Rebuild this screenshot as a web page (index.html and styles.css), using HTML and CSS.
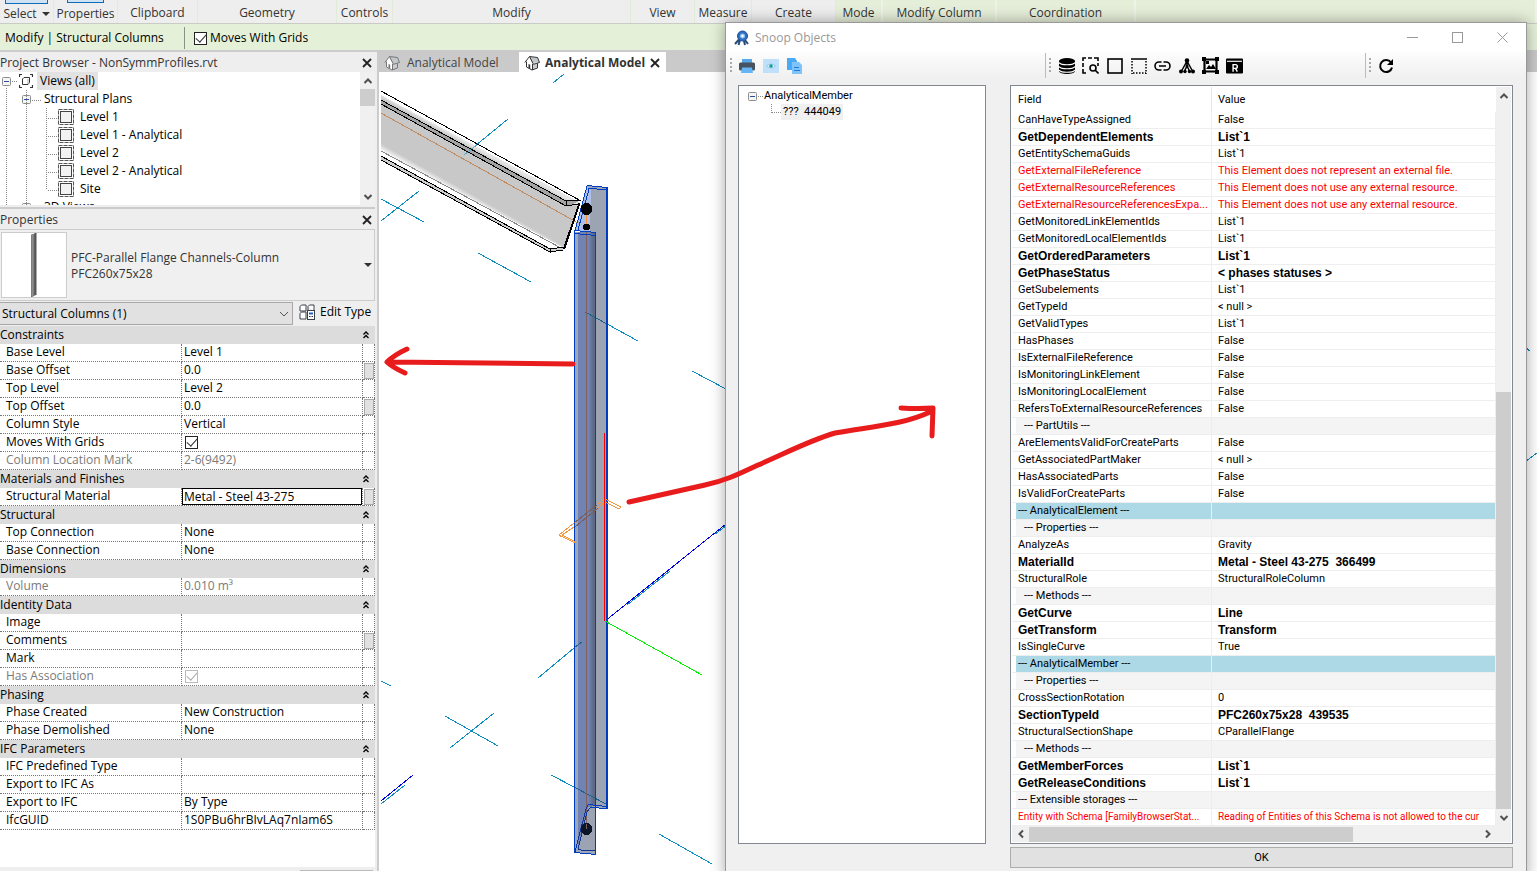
FILE: index.html
```html
<!DOCTYPE html>
<html lang="en">
<head>
<meta charset="utf-8">
<title>Snoop Objects</title>
<link rel="stylesheet" href="styles.css">
</head>
<body>
<svg class="defs" width="0" height="0" aria-hidden="true">
  <symbol id="house" viewBox="0 0 16 16">
    <path d="M1 6.500 5.500 2v11.500L2.500 12V7z" fill="#fff"/>
    <path d="M5.500 1.500 14 3l1.300 4.500L7 8z" fill="#c3c7cc"/>
    <path d="M2.500 7 5.500 3.500 9 9v5.500L7 15l-4.500-3z" fill="#fff"/>
    <path d="M8.500 9.500 13.500 8v5l-5 2z" fill="#c9cdd2"/>
    <path d="M.800 7.500 5.500 1.500 9.500 9.300M5.500 1.500 13.500 2.500l2 5-6 1.800M2.500 6.500V12l5.500 3 5.500-2V8.500M8.500 9v6" fill="none" stroke="currentColor"/>
    <path d="M4.500 9v4.300l1.700 1V9.800z" fill="currentColor"/>
  </symbol>
  <symbol id="plan" viewBox="0 0 16 16">
    <rect x=".5" y=".5" width="15" height="15" fill="#fff" stroke="#555" stroke-dasharray="4 1"/>
    <rect x="2.500" y="2.500" width="11" height="11" fill="#f2f2f2" stroke="#444"/>
  </symbol>
  <symbol id="minus" viewBox="0 0 9 9">
    <rect x=".5" y=".5" width="8" height="8" rx="1" fill="#f6f6f6" stroke="#8c8c8c"/>
    <path d="M2 4.500h5" stroke="#2b4fa3"/>
  </symbol>
  <symbol id="close" viewBox="0 0 10 10">
    <path d="M1 1l8 8M9 1 1 9" stroke="#222" stroke-width="1.800" fill="none"/>
  </symbol>
  <symbol id="fold" viewBox="0 0 8 8">
    <path d="M1.500 3.500 4 1l2.500 2.500M1.500 7 4 4.500 6.500 7" stroke="#000" stroke-width="1.300" fill="none"/>
  </symbol>
  <symbol id="chev" viewBox="0 0 10 10">
    <path d="M1.500 7 5 3.500 8.500 7" stroke="#505050" stroke-width="2" fill="none"/>
  </symbol>
</svg>

<div class="app">
  <nav class="ribbon">
    <div class="panel p-select"><button class="plain">Select <span class="caret"></span></button></div>
    <div class="panel p-props"><span>Properties</span></div>
    <div class="panel p-clip">Clipboard</div>
    <div class="panel p-geom">Geometry</div>
    <div class="panel p-ctrl">Controls</div>
    <div class="panel p-mod">Modify</div>
    <div class="panel p-view">View</div>
    <div class="panel p-meas">Measure</div>
    <div class="panel p-create">Create</div>
    <div class="panel green p-mode">Mode</div>
    <div class="panel green p-modcol">Modify Column</div>
    <div class="panel green p-coord">Coordination</div>
    <div class="panel green p-rest"></div>
  </nav>

  <div class="options">
    <span class="context">Modify | Structural Columns</span>
    <label class="opt"><input type="checkbox" class="check" checked> Moves With Grids</label>
  </div>

  <main class="work">
    <aside class="side">
      <header class="side-title"><span>Project Browser - NonSymmProfiles.rvt</span><button class="icon-btn" aria-label="Close project browser"><svg width="10" height="10"><use href="#close"/></svg></button></header>
      <div class="browser">
        <div class="tree">
          <svg class="tree-lines" width="60" height="134" aria-hidden="true">
            <path d="M6.500 16v118M26.500 18v116M46.500 36v82M12 9.500h5M32 28.500h9M48 46.500h9M48 64.500h9M48 82.500h9M48 100.500h9M48 118.500h9" stroke="#888" stroke-dasharray="1 1" fill="none"/>
          </svg>
          <ul>
            <li class="lv0"><svg width="9" height="9"><use href="#minus"/></svg><svg width="14" height="14" viewBox="0 0 14 14" fill="none"><path d="M.5 3V.5H3M11 .5h2.500V3M13.500 11v2.500H11M3 13.500H.5V11" stroke="#333" stroke-width="1.200"/><path d="M3.500 5 5 3.500h5.500v5L9 10.500H3.500z" fill="#fff" stroke="#333"/><path d="M9 10V5" stroke="#aaa"/></svg><span class="sel">Views (all)</span></li>
            <li class="lv1"><svg width="9" height="9"><use href="#minus"/></svg><span>Structural Plans</span></li>
            <li class="lv2"><svg width="16" height="16"><use href="#plan"/></svg><span>Level 1</span></li>
            <li class="lv2"><svg width="16" height="16"><use href="#plan"/></svg><span>Level 1 - Analytical</span></li>
            <li class="lv2"><svg width="16" height="16"><use href="#plan"/></svg><span>Level 2</span></li>
            <li class="lv2"><svg width="16" height="16"><use href="#plan"/></svg><span>Level 2 - Analytical</span></li>
            <li class="lv2"><svg width="16" height="16"><use href="#plan"/></svg><span>Site</span></li>
            <li class="lv1"><svg width="9" height="9"><use href="#minus"/></svg><span>3D Views</span></li>
          </ul>
        </div>
        <div class="vbar">
          <button class="icon-btn arrow" aria-label="Scroll up"><svg width="10" height="10"><use href="#chev"/></svg></button>
          <div class="track"><div class="thumb short"></div></div>
          <button class="icon-btn arrow down" aria-label="Scroll down"><svg width="10" height="10"><use href="#chev"/></svg></button>
        </div>
      </div>

      <header class="side-title props-title"><span>Properties</span><button class="icon-btn" aria-label="Close properties"><svg width="10" height="10"><use href="#close"/></svg></button></header>
      <button class="type">
        <svg class="thumb-img" width="66" height="66" viewBox="0 0 66 66"><rect x=".5" y=".5" width="65" height="65" fill="#fff" stroke="#ccc"/><path d="M30 3l5-2v62l-4 2h-1z" fill="#6d6d6d"/><path d="M31.500 2v62" stroke="#8e8e8e" stroke-width="2"/><path d="M34.500 1v62" stroke="#555" stroke-width="2"/></svg>
        <span class="type-name">PFC-Parallel Flange Channels-Column<br>PFC260x75x28</span>
        <span class="caret"></span>
      </button>
      <div class="filter">
        <div class="combo">
          <select aria-label="Category"><option>Structural Columns (1)</option></select>
          <svg width="10" height="6" viewBox="0 0 10 6"><path d="M1 1l4 4 4-4" fill="none" stroke="#555"/></svg>
        </div>
        <button class="plain edit"><svg width="16" height="16" viewBox="0 0 16 16" fill="#fff" stroke="#3a4048"><path d="M1 2.500 2.500 1H7v6H1zM9 2.500 10.500 1H15v6M9 7V2.500M1 9.500 2.500 8H7v7H1z"/><rect x="8.500" y="6.500" width="7" height="9"/><path d="M10 9.500h4" stroke="#1f62b8" stroke-width="2"/><path d="M10 12.500h1.500M12.500 12.500H14" stroke="#333"/></svg> Edit Type</button>
      </div>

      <div class="grid-wrap">
      <table class="props">
        <colgroup><col class="c-name"><col><col class="c-btn"></colgroup>
        <tbody>
        <tr class="group"><th colspan="3"><div>Constraints <button class="icon-btn" aria-label="Collapse"><svg width="8" height="8"><use href="#fold"/></svg></button></div></th></tr>
        <tr><th>Base Level</th><td>Level 1</td><td></td></tr>
        <tr><th>Base Offset</th><td>0.0</td><td><button class="assoc" aria-label="Associate"></button></td></tr>
        <tr><th>Top Level</th><td>Level 2</td><td></td></tr>
        <tr><th>Top Offset</th><td>0.0</td><td><button class="assoc" aria-label="Associate"></button></td></tr>
        <tr><th>Column Style</th><td>Vertical</td><td></td></tr>
        <tr><th><label for="mwg">Moves With Grids</label></th><td class="tick"><input id="mwg" type="checkbox" class="check" checked></td><td></td></tr>
        <tr class="off"><th>Column Location Mark</th><td>2-6(9492)</td><td></td></tr>
        <tr class="group"><th colspan="3"><div>Materials and Finishes <button class="icon-btn" aria-label="Collapse"><svg width="8" height="8"><use href="#fold"/></svg></button></div></th></tr>
        <tr><th><label for="mat">Structural Material</label></th><td class="edit-cell"><input id="mat" type="text" value="Metal - Steel 43-275"></td><td><button class="assoc" aria-label="Associate"></button></td></tr>
        <tr class="group"><th colspan="3"><div>Structural <button class="icon-btn" aria-label="Collapse"><svg width="8" height="8"><use href="#fold"/></svg></button></div></th></tr>
        <tr><th>Top Connection</th><td>None</td><td></td></tr>
        <tr><th>Base Connection</th><td>None</td><td></td></tr>
        <tr class="group"><th colspan="3"><div>Dimensions <button class="icon-btn" aria-label="Collapse"><svg width="8" height="8"><use href="#fold"/></svg></button></div></th></tr>
        <tr class="off"><th>Volume</th><td>0.010 m³</td><td></td></tr>
        <tr class="group"><th colspan="3"><div>Identity Data <button class="icon-btn" aria-label="Collapse"><svg width="8" height="8"><use href="#fold"/></svg></button></div></th></tr>
        <tr><th>Image</th><td></td><td></td></tr>
        <tr><th>Comments</th><td></td><td><button class="assoc" aria-label="Associate"></button></td></tr>
        <tr><th>Mark</th><td></td><td></td></tr>
        <tr class="off"><th><label for="assoc">Has Association</label></th><td class="tick"><input id="assoc" type="checkbox" class="check" checked disabled></td><td></td></tr>
        <tr class="group"><th colspan="3"><div>Phasing <button class="icon-btn" aria-label="Collapse"><svg width="8" height="8"><use href="#fold"/></svg></button></div></th></tr>
        <tr><th>Phase Created</th><td>New Construction</td><td></td></tr>
        <tr><th>Phase Demolished</th><td>None</td><td></td></tr>
        <tr class="group"><th colspan="3"><div>IFC Parameters <button class="icon-btn" aria-label="Collapse"><svg width="8" height="8"><use href="#fold"/></svg></button></div></th></tr>
        <tr><th>IFC Predefined Type</th><td></td><td></td></tr>
        <tr><th>Export to IFC As</th><td></td><td></td></tr>
        <tr><th>Export to IFC</th><td>By Type</td><td></td></tr>
        <tr><th>IfcGUID</th><td>1S0PBu6hrBIvLAq7nIam6S</td><td></td></tr>
        </tbody>
      </table>
      </div>
      <footer class="side-foot"><span></span></footer>
    </aside>

    <section class="viewer">
      <div class="tabs">
        <button class="tab"><svg width="16" height="16"><use href="#house"/></svg><span>Analytical Model</span></button>
        <button class="tab active"><svg width="16" height="16"><use href="#house"/></svg><span>Analytical Model</span><svg width="10" height="10"><use href="#close"/></svg></button>
      </div>
      <svg class="model" viewBox="379 72 1158 799" preserveAspectRatio="xMinYMin slice" fill="none" shape-rendering="crispEdges">
        <defs>
          <linearGradient id="web" gradientUnits="userSpaceOnUse" x1="381" y1="95" x2="357" y2="138">
            <stop offset="0" stop-color="#e4e4e4"/><stop offset=".06" stop-color="#c8c8c8"/><stop offset=".86" stop-color="#c8c8c8"/><stop offset="1" stop-color="#fff"/>
          </linearGradient>
          <linearGradient id="flange" x1="0" x2="1" y1="0" y2="0">
            <stop offset="0" stop-color="#7083b3"/><stop offset=".6" stop-color="#7083b3"/><stop offset=".85" stop-color="#5f6b84"/><stop offset="1" stop-color="#5f6b84"/>
          </linearGradient>
        </defs>
        <g stroke="#0a8cc0">
          <path d="M553 83l11-9M464 155l44-36M381 221l38-30M381 199l43 23M478 253l53 29M692 371l34 18M627 605l43-34M715 534l11-8M538 678l36-30M381 681l10 5M445 716l53 30M450 748l44-35M381 804l24-19M551 775l23 12M659 834l53 30M1526 461l11-8M1526 348l4 3"/>
        </g>
        <path d="M605 621l121-97M381 801l32-26" stroke="#0000e0"/>
        <path d="M381 95l198 107-15 46-183-97z" fill="url(#web)"/>
        <path d="M381 100l185 101 14-1-8 5-6 1-185-102z" fill="#a4a4a4"/>
        <path d="M464 155l14-11" stroke="#5fa5bd"/>
        <path d="M381 156l169 93 13-2v3l-13 2-169-92z" fill="#d0d0d0"/>
        <path d="M381 151l180 97" stroke="#888"/>
        <path d="M381 113l206 115" stroke="#c08a5c"/>
        <g stroke="#000">
          <path d="M381 91l200 110M381 100l185 101 14-1M381 104l185 102 12-2M381 156l169 93 14-2M381 160l169 92 13-2M566 201v5M550 249v4"/>
          <path d="M579.500 203 564 249" stroke-width="2"/>
        </g>
        <path d="M587 186l20 2v620l-17-1-3-1z" fill="#9ca3b3"/>
        <path d="M587 187l4 1-1 44-15-1z" fill="#aebfea"/>
        <path d="M574 232l22 2v620l-22-2z" fill="#9ca7ba"/>
        <path d="M578 232h18v574l-8 1-10 42z" fill="url(#flange)"/>
        <path d="M588 807h8v45l-18-3z" fill="#9ca3b3"/>
        <path d="M585 312l22 12M574 648l8-6M574 787l32 17" stroke="#1b648d"/>
        <path d="M607 324l31 17" stroke="#0a8cc0"/>
        <path d="M586.500 232v592" stroke="#80605c"/>
        <path d="M586.500 214v12" stroke="#ff9030"/>
        <g stroke="#003cc0">
          <path d="M574.500 231v621M595.500 233v621M587 185.500l20 2M588 188.500l18 1M587 186l-12 45M589 189l-11 41M574 230.500l22 2M575 233.500l21 2M588 804.500l19 2M590 807.500l17 1M574 852.500l22 2"/>
          <path d="M606.500 187v622" stroke-width="2"/>
          <path d="M588 805l-2 4-11 43M590 808l-3 4-9 37 3 1 15 1" stroke="#12368f"/>
        </g>
        <g fill="#000"><circle cx="586.500" cy="209" r="6"/><circle cx="586.500" cy="227" r="3.500"/><circle cx="586.500" cy="829" r="6" fill="#0d1528"/></g>
        <path d="M586.500 824v5" stroke="#80605c"/>
        <path d="M574 523l-15 12 16 8M574 527l-12 8 14 7M597 505l8-6 16 8-2 2-14-7-7 6M559 535l2 2" stroke="#f59540"/>
        <path d="M574 523l23-18M575 527l23-19" stroke="#7d5c55"/>
        <path d="M604.500 433v188" stroke="#ff0000"/>
        <path d="M605 621l97 54" stroke="#00f000"/>
      </svg>
    </section>
  </main>
</div>

<section class="dialog" role="dialog" aria-labelledby="dlg-title">
  <header class="dlg-head">
    <svg width="16" height="16" viewBox="0 0 16 16"><path d="M1 14l4-4.500M11 10l3 4M6 10l-1.500 5M10 11l1 4" stroke="#274b78" stroke-width="2"/><circle cx="8.500" cy="6" r="5" fill="#2f6fc4" stroke="#1c4d91"/><circle cx="8.500" cy="6" r="2.500" fill="#8cc4f4"/><circle cx="8.500" cy="6" r="1.200" fill="#fff"/></svg>
    <h1 id="dlg-title">Snoop Objects</h1>
    <div class="win-btns">
      <button class="icon-btn" aria-label="Minimize"><svg width="11" height="11" viewBox="0 0 11 11"><path d="M0 5.500h11" stroke="#999"/></svg></button>
      <button class="icon-btn" aria-label="Maximize"><svg width="11" height="11" viewBox="0 0 11 11"><rect x=".5" y=".5" width="10" height="10" fill="none" stroke="#999"/></svg></button>
      <button class="icon-btn" aria-label="Close"><svg width="11" height="11" viewBox="0 0 11 11"><path d="M.5.5l10 10M10.500.5l-10 10" stroke="#999"/></svg></button>
    </div>
  </header>
  <div class="toolbars">
    <div class="strip s1"><i class="grip"></i>
      <button class="icon-btn" aria-label="Print"><svg width="18" height="16" viewBox="0 0 18 16"><rect x="4" y="1" width="10" height="5" fill="#56a8e8"/><rect x="1" y="4.500" width="16" height="8" rx="1.500" fill="#47525e"/><path d="M4 9.500h10l1 5.500H3z" fill="#63b5f5"/></svg></button>
      <button class="icon-btn" aria-label="Preview"><svg width="16" height="14" viewBox="0 0 16 14"><rect width="16" height="14" fill="#bfe0fb"/><path d="M3.500 7Q8 3 12.500 7 8 11 3.500 7z" fill="#e3f4fc" stroke="#8bc2dd" stroke-width=".8"/><circle cx="8" cy="7" r="1.800" fill="#149c9c"/></svg></button>
      <button class="icon-btn" aria-label="Copy"><svg width="16" height="16" viewBox="0 0 16 16"><path d="M1 0h8l2 3v9H1z" fill="#4ba9f5"/><path d="M6 4h7l3 3v9H6z" fill="#7ec4fa"/><path d="M8 9.500h5M8 12.500h6" stroke="#217bd0"/></svg></button>
    </div>
    <div class="strip s2"><i class="grip"></i>
      <button class="icon-btn" aria-label="Snoop database"><svg width="16" height="16" viewBox="0 0 16 16"><path d="M0 3v10c0 4 16 4 16 0V3z"/><ellipse cx="8" cy="3" rx="8" ry="3"/><path d="M0 4.500c2 3 14 3 16 0M0 8.500c2 3 14 3 16 0M0 12c2 3 14 3 16 0" stroke="#fff" stroke-width="1.200" fill="none"/></svg></button>
      <button class="icon-btn" aria-label="Snoop current selection"><svg width="17" height="17" viewBox="0 0 17 17" fill="none" stroke="#000" stroke-width="1.600"><path d="M1 4V1h3M6 1h4M12 1h4v3M16 6v3M1 6v4M1 12v4h3"/><circle cx="11" cy="11" r="3"/><path d="M13 13l3.500 3.500"/></svg></button>
      <button class="icon-btn" aria-label="Pick face"><svg width="16" height="16" viewBox="0 0 16 16" fill="none" stroke="#000" stroke-width="1.600"><rect x="1" y="1" width="14" height="14"/></svg></button>
      <button class="icon-btn" aria-label="Pick edge"><svg width="16" height="16" viewBox="0 0 16 16" fill="none" stroke="#000" stroke-width="1.500"><path d="M0 1h16"/><path d="M1 3v13M15 3v13M2 15h13" stroke-dasharray="1.500 1.500"/></svg></button>
      <button class="icon-btn" aria-label="Linked element"><svg width="17" height="10" viewBox="0 0 17 10" fill="none" stroke="#000" stroke-width="1.600"><path d="M7.500 1H5a4 4 0 0 0 0 8h2.500M9.500 1H12a4 4 0 0 1 0 8H9.500M5 5h7"/></svg></button>
      <button class="icon-btn" aria-label="Dependent elements"><svg width="16" height="16" viewBox="0 0 16 16"><path d="M8 2v6M8 3 2 14M8 3l6 11M8 8l-3 6M8 8l3 6" stroke="#000" stroke-width="1.500"/><circle cx="8" cy="2.500" r="2.300"/><circle cx="2" cy="13.500" r="2"/><circle cx="6" cy="13.500" r="1.700"/><circle cx="10.500" cy="13.500" r="1.700"/><circle cx="14" cy="13.500" r="2"/><circle cx="8" cy="8" r="1.500"/></svg></button>
      <button class="icon-btn" aria-label="Active view"><svg width="17" height="17" viewBox="0 0 17 17"><path d="M2.500 2.500h12v12h-12z" fill="none" stroke="#000" stroke-width="2.200"/><path d="M0 0h4v4H0zM13 0h4v4h-4zM0 13h4v4H0zM13 13h4v4h-4zM4 12l3-4 2 2 2-3 3 5zM4 4h3v3H4z"/></svg></button>
      <button class="icon-btn" aria-label="Snoop application"><svg width="18" height="16" viewBox="0 0 18 16"><rect width="18" height="16" rx="1"/><path d="M1 3h16" stroke="#fff" stroke-width="1.200"/><path d="M7.500 14V6.500h2.500a2 2 0 0 1 0 4H8M10 10.500l2 3.500" fill="none" stroke="#fff" stroke-width="1.500"/></svg></button>
    </div>
    <div class="strip s3"><i class="grip"></i>
      <button class="icon-btn" aria-label="Refresh"><svg width="16" height="16" viewBox="0 0 16 16"><path d="M13 4.500A6 6 0 1 0 14 9.500" fill="none" stroke="#000" stroke-width="2"/><path d="M15 1v6H9z"/></svg></button>
    </div>
  </div>

  <div class="dlg-body">
    <div class="objects">
      <ul>
        <li class="o0"><svg width="9" height="9"><use href="#minus"/></svg><i class="dots"></i><span>AnalyticalMember</span></li>
        <li class="o1"><i class="elbow"></i><span class="sel">???&nbsp; 444049</span></li>
      </ul>
    </div>
    <div class="results">
      <div class="list">
        <div class="list-main">
          <table class="snoop">
            <colgroup><col class="c-field"><col></colgroup>
            <thead><tr><th>Field</th><th>Value</th></tr></thead>
            <tbody>
            <tr><td>CanHaveTypeAssigned</td><td>False</td></tr>
            <tr class="b"><td>GetDependentElements</td><td>List`1</td></tr>
            <tr><td>GetEntitySchemaGuids</td><td>List`1</td></tr>
            <tr class="err"><td>GetExternalFileReference</td><td>This Element does not represent an external file.</td></tr>
            <tr class="err"><td>GetExternalResourceReferences</td><td>This Element does not use any external resource.</td></tr>
            <tr class="err"><td>GetExternalResourceReferencesExpa...</td><td>This Element does not use any external resource.</td></tr>
            <tr><td>GetMonitoredLinkElementIds</td><td>List`1</td></tr>
            <tr><td>GetMonitoredLocalElementIds</td><td>List`1</td></tr>
            <tr class="b"><td>GetOrderedParameters</td><td>List`1</td></tr>
            <tr class="b"><td>GetPhaseStatus</td><td>&lt; phases statuses &gt;</td></tr>
            <tr><td>GetSubelements</td><td>List`1</td></tr>
            <tr><td>GetTypeId</td><td>&lt; null &gt;</td></tr>
            <tr><td>GetValidTypes</td><td>List`1</td></tr>
            <tr><td>HasPhases</td><td>False</td></tr>
            <tr><td>IsExternalFileReference</td><td>False</td></tr>
            <tr><td>IsMonitoringLinkElement</td><td>False</td></tr>
            <tr><td>IsMonitoringLocalElement</td><td>False</td></tr>
            <tr><td>RefersToExternalResourceReferences</td><td>False</td></tr>
            <tr class="sub in"><td>--- PartUtils ---</td><td></td></tr>
            <tr><td>AreElementsValidForCreateParts</td><td>False</td></tr>
            <tr><td>GetAssociatedPartMaker</td><td>&lt; null &gt;</td></tr>
            <tr><td>HasAssociatedParts</td><td>False</td></tr>
            <tr><td>IsValidForCreateParts</td><td>False</td></tr>
            <tr class="cls"><td>--- AnalyticalElement ---</td><td></td></tr>
            <tr class="sub in"><td>--- Properties ---</td><td></td></tr>
            <tr><td>AnalyzeAs</td><td>Gravity</td></tr>
            <tr class="b"><td>MaterialId</td><td>Metal - Steel 43-275&nbsp; 366499</td></tr>
            <tr><td>StructuralRole</td><td>StructuralRoleColumn</td></tr>
            <tr class="sub in"><td>--- Methods ---</td><td></td></tr>
            <tr class="b"><td>GetCurve</td><td>Line</td></tr>
            <tr class="b"><td>GetTransform</td><td>Transform</td></tr>
            <tr><td>IsSingleCurve</td><td>True</td></tr>
            <tr class="cls"><td>--- AnalyticalMember ---</td><td></td></tr>
            <tr class="sub in"><td>--- Properties ---</td><td></td></tr>
            <tr><td>CrossSectionRotation</td><td>0</td></tr>
            <tr class="b"><td>SectionTypeId</td><td>PFC260x75x28&nbsp; 439535</td></tr>
            <tr><td>StructuralSectionShape</td><td>CParallelFlange</td></tr>
            <tr class="sub in"><td>--- Methods ---</td><td></td></tr>
            <tr class="b"><td>GetMemberForces</td><td>List`1</td></tr>
            <tr class="b"><td>GetReleaseConditions</td><td>List`1</td></tr>
            <tr class="sub"><td>--- Extensible storages ---</td><td></td></tr>
            <tr class="err long"><td>Entity with Schema [FamilyBrowserStat...</td><td>Reading of Entities of this Schema is not allowed to the cur</td></tr>
            </tbody>
          </table>
        </div>
        <div class="vbar">
          <button class="icon-btn arrow" aria-label="Scroll up"><svg width="10" height="10"><use href="#chev"/></svg></button>
          <div class="track"><div class="spacer"></div><div class="thumb tall"></div></div>
          <button class="icon-btn arrow down" aria-label="Scroll down"><svg width="10" height="10"><use href="#chev"/></svg></button>
        </div>
        <div class="hbar">
          <button class="icon-btn arrow left" aria-label="Scroll left"><svg width="10" height="10"><use href="#chev"/></svg></button>
          <div class="track"><div class="thumb wide"></div></div>
          <button class="icon-btn arrow right" aria-label="Scroll right"><svg width="10" height="10"><use href="#chev"/></svg></button>
        </div>
      </div>
      <button class="ok">OK</button>
    </div>
  </div>
</section>

<svg class="ink" viewBox="0 0 1537 871" preserveAspectRatio="xMinYMin slice" fill="none" stroke="#e81c1c" stroke-width="5" stroke-linecap="round" stroke-linejoin="round" aria-hidden="true">
  <path d="M573 364 388 362M407 349Q394 355 387 362 392 367 405 373"/>
  <path d="M629 502l76-17c20-4 36-12 53-20 26-11 50-24 77-32 32-6 68-8 95-21M901 408q18 1 32 0l-1 28"/>
</svg>
</body>
</html>
```

FILE: styles.css
```css
* { box-sizing: border-box; }

body {
  margin: 0;
  height: 100vh;
  overflow: hidden;
  background: #eee;
  color: #000;
  font: 12px/18px "Open Sans", "Noto Sans", sans-serif;
}

button, input, select { font: inherit; color: inherit; }
ul { list-style: none; margin: 0; padding: 0; }
.defs { position: absolute; }

.plain, .icon-btn {
  border: 0;
  padding: 0;
  background: none;
}

.icon-btn {
  display: flex;
  align-items: center;
  justify-content: center;
  flex: none;
}

.caret {
  display: inline-block;
  border: 4px solid transparent;
  border-top-color: #333;
  border-bottom: 0;
}

.check {
  appearance: none;
  display: inline-grid;
  place-items: center;
  width: 13px;
  height: 13px;
  margin: 0;
  border: 1px solid #222;
  background: #fff;
  vertical-align: middle;
}

.check:checked::before {
  content: "";
  width: 9px;
  height: 5px;
  margin-bottom: 3px;
  border: solid #333;
  border-width: 0 0 1px 1px;
  transform: rotate(-48deg);
}

.check:disabled { border-color: #bbb; }
.check:disabled::before { border-color: #aaa; }

.app { display: flex; flex-direction: column; height: 100%; }

/* ribbon */
.ribbon {
  display: flex;
  flex: none;
  height: 24px;
  border-bottom: 1px solid #c9ccc4;
  color: #333;
}

.panel {
  flex: none;
  padding-top: 4px;
  text-align: center;
  white-space: nowrap;
  border-right: 1px solid #e2ebd6;
}

.panel.green { background: #e5eed8; border-right: 2px solid #eef3e6; }
.p-select { width: 54px; }
.p-select::before, .p-props::before {
  content: "";
  display: block;
  height: 2px;
  margin: -4px 5px 2px;
  border: 1px solid #0f6cbd;
  border-top: 0;
  background: #cfe3f5;
}
.p-select::before { height: 3px; margin-bottom: 1px; }
.p-props::before { margin: -4px 13px 2px; }
.p-props { width: 64px; }
.p-clip { width: 80px; }
.p-geom { width: 139px; }
.p-ctrl { width: 56px; }
.p-mod { width: 238px; }
.p-view { width: 64px; }
.p-meas { width: 57px; }
.p-create { width: 84px; }
.p-mode { width: 47px; }
.p-modcol { width: 114px; }
.p-coord { width: 139px; }
.p-rest { flex: 1; }
.panel .caret { margin-left: 2px; vertical-align: 2px; }

.options {
  display: flex;
  align-items: center;
  flex: none;
  height: 26px;
  padding: 2px 0 0 5px;
  background: #e5f0d8;
}

.context { width: 180px; line-height: 22px; border-right: 1px solid #8b9085; }
.opt { display: flex; align-items: center; gap: 3px; padding-left: 9px; }

.work {
  display: grid;
  grid-template-columns: 379px minmax(0, 1fr);
  flex: 1;
  min-height: 0;
}

/* side panels */
.side {
  display: flex;
  flex-direction: column;
  min-height: 0;
  padding-right: 2px;
  background: #eee;
  border-top: 2px solid #ccc;
  border-right: 2px solid #ccc;
}

.side-title {
  display: flex;
  align-items: center;
  justify-content: space-between;
  flex: none;
  height: 20px;
  padding: 2px 3px 0 0;
  color: #333;
  white-space: nowrap;
}

.browser { display: flex; flex: none; height: 133px; background: #fff; }
.tree { position: relative; flex: 1; overflow: hidden; white-space: nowrap; }
.tree-lines { position: absolute; left: 0; top: 0; }
.tree li { display: flex; align-items: center; height: 18px; }
.tree li svg { flex: none; }
.lv0 { padding-left: 2px; gap: 8px; }
.lv0 .sel { padding: 0 3px; margin-left: -4px; background: #e2e2e2; }
.lv1 { padding-left: 22px; gap: 13px; }
.lv2 { padding-left: 58px; gap: 6px; }

.vbar { display: flex; flex-direction: column; flex: none; width: 15px; background: #f0f0f0; }
.vbar .track { flex: 1; display: flex; flex-direction: column; min-height: 0; }
.arrow { width: 15px; height: 17px; }
.arrow.down svg { transform: rotate(180deg); }
.arrow.left svg { transform: rotate(-90deg); }
.arrow.right svg { transform: rotate(90deg); }
.thumb { background: #cdcdcd; }
.thumb.short { height: 17px; }

.props-title { height: 22px; padding-top: 1px; margin-top: 2px; border-top: 2px solid #ccc; }

.type {
  display: flex;
  align-items: center;
  flex: none;
  height: 72px;
  padding: 0 2px 0 1px;
  border: 1px solid #ccc;
  border-left: 0;
  background: #f0f0f0;
  color: #333;
  text-align: left;
}

.type-name { flex: 1; padding: 2px 0 0 4px; line-height: 16px; white-space: nowrap; }

.filter { display: flex; flex: none; height: 25px; padding-top: 1px; }
.combo { position: relative; width: 293px; height: 23px; }
.combo select {
  appearance: none;
  width: 100%;
  height: 23px;
  padding: 0 2px;
  border: 1px solid #a8a8a8;
  border-left: 0;
  border-radius: 0;
  background: #e1e1e1;
}
.combo svg { position: absolute; right: 4px; top: 9px; }
.edit { display: flex; align-items: center; gap: 5px; height: 20px; padding-left: 6px; white-space: nowrap; }

.grid-wrap { flex: 1; min-height: 0; overflow: hidden; background: #fff; }
.side-foot { display: flex; justify-content: flex-end; flex: none; height: 4px; padding: 3px 2px 0 0; }
.side-foot span { width: 73px; background: #bbb; }

.props { width: 100%; border-collapse: separate; border-spacing: 0; table-layout: fixed; }
.c-name { width: 182px; }
.c-btn { width: 12px; }
.props tr { height: 18px; }
.props th, .props td {
  height: 18px;
  padding: 0 0 1px 2px;
  border-bottom: 1px dotted #777;
  border-right: 1px dotted #777;
  font-weight: 400;
  line-height: 16px;
  text-align: left;
  white-space: nowrap;
}
.props th { padding-left: 6px; }
.props .group th { padding: 0 5px 0 0; border: 0; background: #dcdcdc; }
.props .group div { display: flex; align-items: center; justify-content: space-between; }
.props .off { color: #7a7a7a; }
.props .tick { padding-left: 3px; }
.props td:last-child { padding: 0 0 0 1px; }
.props .edit-cell { padding: 0; }
.edit-cell input {
  display: block;
  width: 100%;
  height: 17px;
  padding: 0 1px;
  border: 1px solid #000;
  background: #fff;
}
.assoc { display: block; width: 10px; height: 16px; padding: 0; border: 1px solid #aaa; background: #e1e1e1; }

/* model view */
.viewer { display: flex; flex-direction: column; min-width: 0; min-height: 0; background: #fff; }
.tabs { display: flex; flex: none; height: 22px; padding-top: 2px; background: #cacaca; }
.tab {
  display: flex;
  align-items: center;
  gap: 7px;
  width: 140px;
  padding: 1px 5px 0;
  border: 0;
  background: none;
  color: #444;
  white-space: nowrap;
}
.tab svg { flex: none; color: #777; }
.tab.active { width: 147px; gap: 5px; background: #fff; color: #333; font-weight: 700; }
.tab.active svg { color: #333; }
.model { display: block; width: 100%; flex: 1; min-height: 0; }

/* floating dialog */
.dialog {
  position: absolute;
  left: 725px;
  top: 22px;
  right: 10px;
  bottom: -8px;
  display: flex;
  flex-direction: column;
  border: 1px solid #999;
  background: #f0f0f0;
  box-shadow: 0 0 14px rgba(0, 0, 0, .35);
}

.dlg-head { display: flex; align-items: center; flex: none; height: 29px; padding: 0 18px 0 8px; gap: 5px; background: #fff; }
.dlg-head h1 { flex: 1; margin: 0; color: #999; font-size: 12px; font-weight: 400; }
.win-btns { display: flex; gap: 34px; }

.toolbars { display: flex; flex: none; height: 26px; padding-top: 1px; background: linear-gradient(#fdfdfd, #f0f0f0); }
.strip { display: flex; align-items: center; gap: 7px; }
.strip + .strip { border-left: 1px solid #bbb; }
.strip .grip { width: 2px; height: 15px; background: repeating-linear-gradient(#aaa 0 2px, transparent 2px 4px); }
.s1 { width: 319px; padding-left: 4px; }
.s1 .grip { margin-right: -1px; }
.s2 { width: 320px; padding-left: 3px; }
.s2 .icon-btn { width: 17px; }
.s3 { flex: 1; padding-left: 3px; }

.dlg-body {
  display: grid;
  grid-template-columns: 248px minmax(0, 1fr);
  column-gap: 24px;
  flex: 1;
  min-height: 0;
  padding: 7px 13px 10px 12px;
  font: 11px/16px Roboto, "Liberation Sans", sans-serif;
}

.objects { margin-bottom: 24px; padding: 2px 1px 1px; border: 1px solid #828790; background: #fff; }
.objects li { display: flex; align-items: center; height: 16px; }
.o0 { padding-left: 8px; }
.dots { width: 5px; margin: 0 1px; border-top: 1px dotted #888; }
.elbow { width: 10px; height: 9px; margin: -8px 0 0 31px; border: dotted #888; border-width: 0 0 1px 1px; }
.objects .sel { padding: 0 2px; background: #f0f0f0; }

.results { display: flex; flex-direction: column; gap: 3px; min-height: 0; }
.list {
  display: grid;
  grid-template-columns: minmax(0, 1fr) 15px;
  grid-template-rows: minmax(0, 1fr) 16px;
  flex: 1;
  min-height: 0;
  padding: 1px;
  border: 1px solid #828790;
  background: #fff;
}
.list-main { overflow: hidden; }
.list .hbar { grid-column: 1 / 3; display: flex; align-items: center; padding-right: 15px; background: #f0f0f0; }
.hbar .arrow { width: 17px; height: 16px; }
.hbar .track { flex: 1; height: 15px; }
.thumb.wide { width: 72%; height: 15px; }
.track .spacer { flex: 288; }
.thumb.tall { flex: 416; }

.snoop { width: 100%; border-collapse: separate; border-spacing: 0; table-layout: fixed; }
.c-field { width: 200px; }
.snoop th {
  height: 25px;
  padding: 0 6px;
  font-weight: 400;
  text-align: left;
  border-right: 1px solid #e5e5e5;
}
.snoop th:last-child { border: 0; }
.snoop td {
  height: 17px;
  padding: 0 0 0 6px;
  border: solid #eee;
  border-width: 0 1px 1px 0;
  line-height: 16px;
  white-space: nowrap;
  overflow: hidden;
}
.snoop .b { font-family: "Liberation Sans", Arial, sans-serif; font-size: 12px; font-weight: 700; }
.snoop .err { color: #f00; }
.snoop .long { font-size: 10px; }
.snoop .sub td { background: #f4f4f4; }
.snoop .cls td { background: #add8e6; }
.snoop .sub td:first-child, .snoop .cls td:first-child { box-shadow: inset 4px 0 #fff; }
.snoop .in td:first-child { padding-left: 12px; }

.ok { flex: none; height: 21px; padding: 0; border: 1px solid #adadad; background: #e1e1e1; }

.ink { position: absolute; inset: 0; width: 100%; height: 100%; pointer-events: none; }
```
